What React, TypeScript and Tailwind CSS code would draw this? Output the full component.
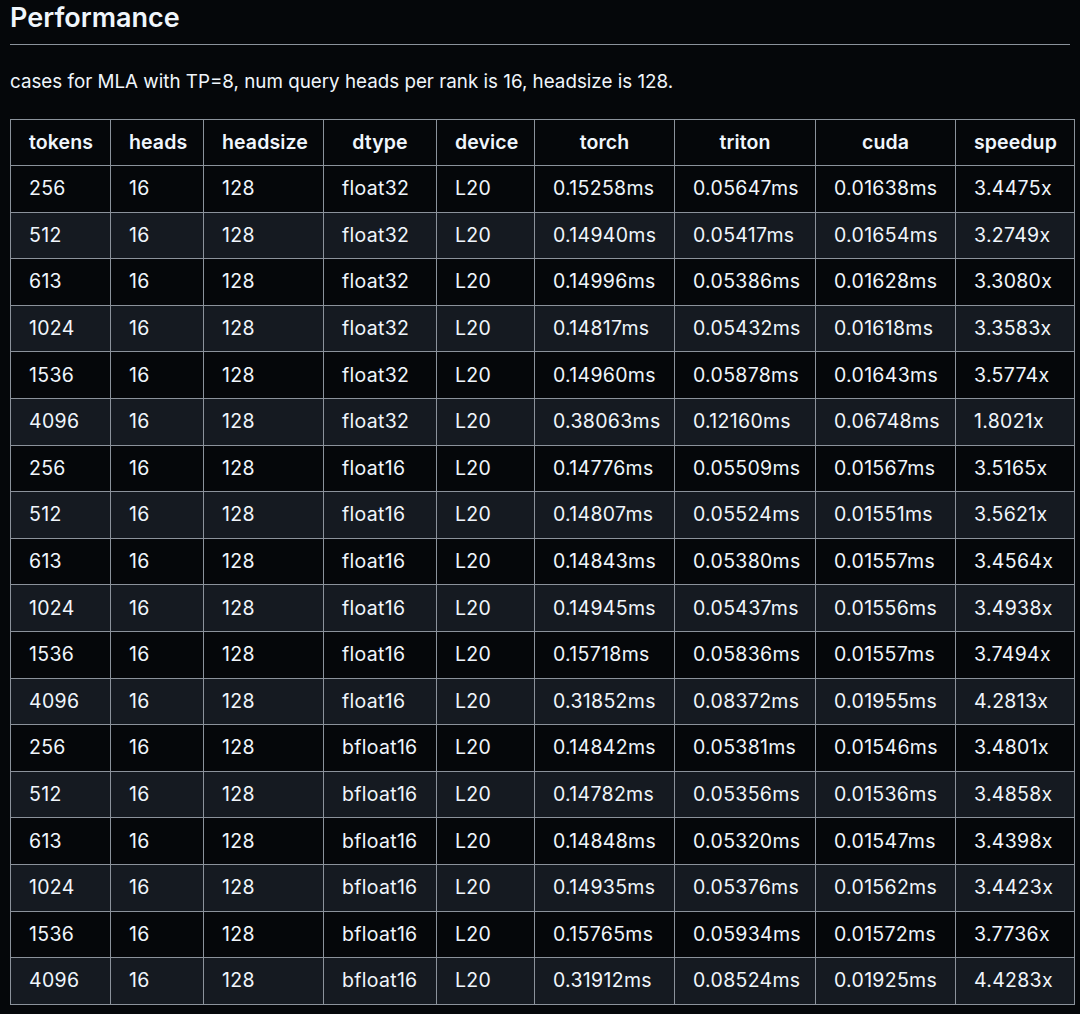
const rows: [string, string, string, string, string, string, string, string, string][] = [
  ["256", "16", "128", "float32", "L20", "0.15258ms", "0.05647ms", "0.01638ms", "3.4475x"],
  ["512", "16", "128", "float32", "L20", "0.14940ms", "0.05417ms", "0.01654ms", "3.2749x"],
  ["613", "16", "128", "float32", "L20", "0.14996ms", "0.05386ms", "0.01628ms", "3.3080x"],
  ["1024", "16", "128", "float32", "L20", "0.14817ms", "0.05432ms", "0.01618ms", "3.3583x"],
  ["1536", "16", "128", "float32", "L20", "0.14960ms", "0.05878ms", "0.01643ms", "3.5774x"],
  ["4096", "16", "128", "float32", "L20", "0.38063ms", "0.12160ms", "0.06748ms", "1.8021x"],
  ["256", "16", "128", "float16", "L20", "0.14776ms", "0.05509ms", "0.01567ms", "3.5165x"],
  ["512", "16", "128", "float16", "L20", "0.14807ms", "0.05524ms", "0.01551ms", "3.5621x"],
  ["613", "16", "128", "float16", "L20", "0.14843ms", "0.05380ms", "0.01557ms", "3.4564x"],
  ["1024", "16", "128", "float16", "L20", "0.14945ms", "0.05437ms", "0.01556ms", "3.4938x"],
  ["1536", "16", "128", "float16", "L20", "0.15718ms", "0.05836ms", "0.01557ms", "3.7494x"],
  ["4096", "16", "128", "float16", "L20", "0.31852ms", "0.08372ms", "0.01955ms", "4.2813x"],
  ["256", "16", "128", "bfloat16", "L20", "0.14842ms", "0.05381ms", "0.01546ms", "3.4801x"],
  ["512", "16", "128", "bfloat16", "L20", "0.14782ms", "0.05356ms", "0.01536ms", "3.4858x"],
  ["613", "16", "128", "bfloat16", "L20", "0.14848ms", "0.05320ms", "0.01547ms", "3.4398x"],
  ["1024", "16", "128", "bfloat16", "L20", "0.14935ms", "0.05376ms", "0.01562ms", "3.4423x"],
  ["1536", "16", "128", "bfloat16", "L20", "0.15765ms", "0.05934ms", "0.01572ms", "3.7736x"],
  ["4096", "16", "128", "bfloat16", "L20", "0.31912ms", "0.08524ms", "0.01925ms", "4.4283x"],
];

const headers = ["tokens", "heads", "headsize", "dtype", "device", "torch", "triton", "cuda", "speedup"];
const widths = ["w-[100px]", "w-[93px]", "w-[120px]", "w-[113px]", "w-[98px]", "w-[140px]", "w-[141px]", "w-[140px]", "w-[119px]"];

export default function App() {
  return (
    <div
      className="min-h-[1014px] bg-[#05070a] text-[#f0f6fc] px-[10px]"
      style={{ fontFamily: "Inter, 'Liberation Sans', sans-serif" }}
    >
      <h2 className="text-[27px] font-semibold leading-[36px] pb-[8px] border-b border-[#8b929b]">Performance</h2>
      <p className="text-[18.8px] leading-[26px] mt-[24px] mb-[24px]">
        cases for MLA with TP=8, num query heads per rank is 16, headsize is 128.
      </p>

      {/* Results Table */}
      <table className="border-collapse w-[1064px] table-fixed text-[19.5px] tracking-[0.3px]">
        <thead>
          <tr className="bg-[#05070a]">
            {headers.map((h, i) => (
              <th
                key={h}
                className={`${widths[i]} border border-[#8b929b] h-[46px] px-[18px] text-center font-semibold leading-[25px] tracking-[0.1px]`}
              >
                {h}
              </th>
            ))}
          </tr>
        </thead>
        <tbody>
          {rows.map((row, r) => (
            <tr key={r} className={r % 2 === 0 ? "bg-[#05070a]" : "bg-[#151a21]"}>
              {row.map((cell, c) => (
                <td key={c} className="border border-[#8b929b] h-[46.6px] px-[18px] text-left leading-[25px] whitespace-nowrap">
                  {cell}
                </td>
              ))}
            </tr>
          ))}
        </tbody>
      </table>
    </div>
  );
}
